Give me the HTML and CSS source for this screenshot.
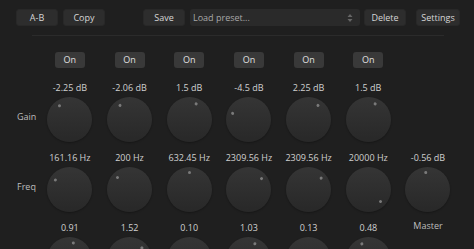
FILE: index.html
```html
<!DOCTYPE html>
<html>
<head>
<meta charset="utf-8">
<link rel="stylesheet" href="styles.css">
</head>
<body>
<div class="toolbar">
  <button class="btn w41">A-B</button>
  <button class="btn w42 ml5">Copy</button>
  <button class="btn w42 ml38">Save</button>
  <div class="select ml5">
    <span>Load preset...</span>
    <svg class="arrows" width="6" height="10" viewBox="0 0 6 10"><path d="M3 1 L5.5 4 L0.5 4 Z M3 9 L5.5 6 L0.5 6 Z" fill="#666"/></svg>
  </div>
  <button class="btn w42 ml4">Delete</button>
  <button class="btn w43 ml10">Settings</button>
</div>
<div class="divider"></div>
<div class="eq">
  <div class="spacer"></div>
  <div class="oncell"><button class="on">On</button></div>
  <div class="oncell"><button class="on">On</button></div>
  <div class="oncell"><button class="on">On</button></div>
  <div class="oncell"><button class="on">On</button></div>
  <div class="oncell"><button class="on">On</button></div>
  <div class="oncell"><button class="on">On</button></div>
  <div class="oncell"></div>

  <div class="label">Gain</div>
  <div class="cell"><div class="val">-2.25 dB</div><div class="knob"><div class="ind" style="transform:rotate(-36deg)"></div></div></div>
  <div class="cell"><div class="val">-2.06 dB</div><div class="knob"><div class="ind" style="transform:rotate(-34deg)"></div></div></div>
  <div class="cell"><div class="val">1.5 dB</div><div class="knob"><div class="ind" style="transform:rotate(23deg)"></div></div></div>
  <div class="cell"><div class="val">-4.5 dB</div><div class="knob"><div class="ind" style="transform:rotate(-69deg)"></div></div></div>
  <div class="cell"><div class="val">2.25 dB</div><div class="knob"><div class="ind" style="transform:rotate(34deg)"></div></div></div>
  <div class="cell"><div class="val">1.5 dB</div><div class="knob"><div class="ind" style="transform:rotate(23deg)"></div></div></div>
  <div class="cell"></div>

  <div class="label">Freq</div>
  <div class="cell"><div class="val">161.16 Hz</div><div class="knob"><div class="ind" style="transform:rotate(-56deg)"></div></div></div>
  <div class="cell"><div class="val">200 Hz</div><div class="knob"><div class="ind" style="transform:rotate(-45deg)"></div></div></div>
  <div class="cell"><div class="val">632.45 Hz</div><div class="knob"><div class="ind" style="transform:rotate(0deg)"></div></div></div>
  <div class="cell"><div class="val">2309.56 Hz</div><div class="knob"><div class="ind" style="transform:rotate(50deg)"></div></div></div>
  <div class="cell"><div class="val">2309.56 Hz</div><div class="knob"><div class="ind" style="transform:rotate(48deg)"></div></div></div>
  <div class="cell"><div class="val">20000 Hz</div><div class="knob"><div class="ind" style="transform:rotate(135deg)"></div></div></div>
  <div class="cell"><div class="val">-0.56 dB</div><div class="knob"><div class="ind" style="transform:rotate(-6deg)"></div></div></div>

  <div class="label"></div>
  <div class="cell"><div class="val">0.91</div><div class="knob"><div class="ind" style="transform:rotate(13deg)"></div></div></div>
  <div class="cell"><div class="val">1.52</div><div class="knob"><div class="ind" style="transform:rotate(47deg)"></div></div></div>
  <div class="cell"><div class="val">0.10</div><div class="knob"><div class="ind" style="transform:rotate(-135deg)"></div></div></div>
  <div class="cell"><div class="val">1.03</div><div class="knob"><div class="ind" style="transform:rotate(22deg)"></div></div></div>
  <div class="cell"><div class="val">0.13</div><div class="knob"><div class="ind" style="transform:rotate(-130deg)"></div></div></div>
  <div class="cell"><div class="val">0.48</div><div class="knob"><div class="ind" style="transform:rotate(-23deg)"></div></div></div>
  <div class="cell"><div class="val master">Master</div></div>
</div>
</body>
</html>
```
FILE: styles.css
```css
html, body {
  margin: 0;
  padding: 0;
  background: #1f1f1f;
  overflow: hidden;
}
body {
  width: 474px;
  height: 249px;
  font-family: "Open Sans", "DejaVu Sans", sans-serif;
  font-size: 9px;
  color: #d0d0d0;
}
.toolbar {
  display: flex;
  align-items: center;
  padding: 9px 0 0 16px;
  height: 17px;
}
.btn {
  height: 17px;
  padding: 0;
  margin: 0;
  border: 1px solid #282828;
  border-radius: 3px;
  background: #2d2d2d;
  color: #d6d6d6;
  font-family: inherit;
  font-size: 9px;
  line-height: 15px;
  box-sizing: border-box;
}
.w41 { width: 42px; }
.w42 { width: 42px; }
.w43 { width: 44px; }
.ml4 { margin-left: 4px; }
.ml5 { margin-left: 5px; }
.ml10 { margin-left: 10px; }
.ml38 { margin-left: 38px; }
.select {
  width: 170px;
  height: 17px;
  box-sizing: border-box;
  background: #2a2a2a;
  border-radius: 3px;
  display: flex;
  align-items: center;
  justify-content: space-between;
  padding: 0 7px 0 3px;
  color: #a8a8a8;
}
.arrows { display: block; }
.divider {
  margin: 9px 0 0 32px;
  width: 412px;
  height: 1px;
  background: #2b2b2b;
}
.eq {
  display: grid;
  grid-template-columns: 40px repeat(7, 59.7px);
  margin-top: 14px;
}
.spacer {
  height: 30px;
}
.oncell {
  display: flex;
  justify-content: center;
  height: 30px;
  align-items: flex-start;
  padding-top: 2px;
}
.on {
  width: 30px;
  height: 16px;
  margin: 0;
  padding: 0;
  border: none;
  border-radius: 3px;
  background: #393939;
  color: #e0e0e0;
  font-family: inherit;
  font-size: 9px;
  line-height: 16px;
}
.label {
  padding-left: 17px;
  padding-top: 29px;
  color: #bdbdbd;
  line-height: 12px;
  height: 41px;
}
.cell {
  display: flex;
  flex-direction: column;
  align-items: center;
  height: 70px;
}
.val {
  line-height: 12px;
  height: 12px;
  margin-bottom: 3px;
  white-space: nowrap;
}
.master {
  margin-top: -2px;
  color: #bdbdbd;
}
.knob {
  position: relative;
  width: 45px;
  height: 45px;
  border-radius: 50%;
  background: linear-gradient(to bottom, #353535, #282828);
  box-shadow: 0 1px 2px rgba(0,0,0,0.3);
}
.ind {
  position: absolute;
  inset: 0;
}
.ind::after {
  content: "";
  position: absolute;
  left: 21px;
  top: 3.5px;
  width: 3px;
  height: 3px;
  border-radius: 50%;
  background: #7a7a7a;
}
```
